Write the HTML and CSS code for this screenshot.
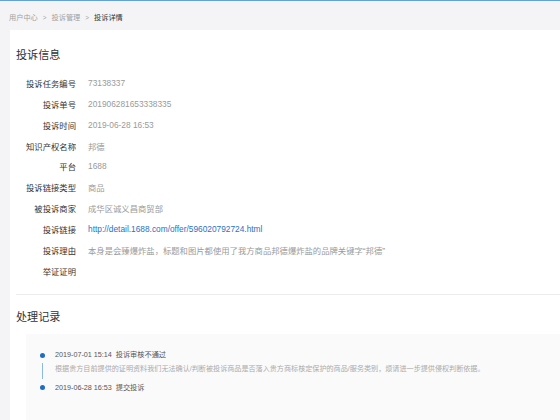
FILE: index.html
```html
<!DOCTYPE html>
<html lang="zh-CN">
<head>
<meta charset="utf-8">
<title>投诉详情</title>
<link rel="stylesheet" href="styles.css">
</head>
<body>
<div class="topbar"></div>
<nav class="crumbs">
  <span class="crumb">用户中心</span><span class="sep">&gt;</span><span class="crumb">投诉管理</span><span class="sep">&gt;</span><span class="crumb current">投诉详情</span>
</nav>
<main class="card">
  <h2 class="title">投诉信息</h2>
  <div class="rows">
    <div class="row"><span class="label">投诉任务编号</span><span class="value">73138337</span></div>
    <div class="row"><span class="label">投诉单号</span><span class="value">201906281653338335</span></div>
    <div class="row"><span class="label">投诉时间</span><span class="value">2019-06-28 16:53</span></div>
    <div class="row"><span class="label">知识产权名称</span><span class="value">邦德</span></div>
    <div class="row"><span class="label">平台</span><span class="value">1688</span></div>
    <div class="row"><span class="label">投诉链接类型</span><span class="value">商品</span></div>
    <div class="row"><span class="label">被投诉商家</span><span class="value">成华区诚义昌商贸部</span></div>
    <div class="row"><span class="label">投诉链接</span><a class="value link" href="#">http://detail.1688.com/offer/596020792724.html</a></div>
    <div class="row"><span class="label">投诉理由</span><span class="value">本身是会臻爆炸盐，标题和图片都使用了我方商品邦德爆炸盐的品牌关键字“邦德”</span></div>
    <div class="row"><span class="label">举证证明</span><span class="value"></span></div>
  </div>
  <div class="divider"></div>
  <h2 class="title title2">处理记录</h2>
  <div class="records">
    <div class="item first">
      <div class="rail"><span class="dot"></span><span class="line"></span></div>
      <div class="body">
        <div class="head">2019-07-01 15:14&nbsp; 投诉审核不通过</div>
        <div class="note">根据贵方目前提供的证明资料我们无法确认/判断被投诉商品是否落入贵方商标核定保护的商品/服务类别，烦请进一步提供侵权判断依据。</div>
      </div>
    </div>
    <div class="item second">
      <div class="rail"><span class="dot"></span></div>
      <div class="body">
        <div class="head">2019-06-28 16:53&nbsp; 提交投诉</div>
      </div>
    </div>
  </div>
</main>
</body>
</html>
```

FILE: styles.css
```css
html, body {
  margin: 0;
  padding: 0;
  height: 420px;
  background: #f4f4f6;
  font-family: "Liberation Sans", "Noto Sans CJK SC", sans-serif;
  overflow: hidden;
}

.topbar {
  height: 1px;
  background: #62a0de;
}

.crumbs {
  padding: 11px 0 0 9px;
  height: 13px;
  line-height: 12px;
  font-size: 7.2px;
  color: #a0a0a0;
  white-space: nowrap;
}

.sep {
  margin: 0 5px;
  font-size: 6.4px;
}

.crumb.current {
  color: #333;
}

.card {
  box-sizing: border-box;
  margin: 5px 0 0 10px;
  background: #fff;
  padding: 17.3px 0 0 6px;
  height: 391px;
  overflow: hidden;
}

.title {
  margin: 0;
  font-size: 11.1px;
  font-weight: normal;
  line-height: 16px;
  color: #333;
}

.rows {
  margin-top: 9.3px;
}

.row {
  display: flex;
  height: 20.85px;
  align-items: center;
  font-size: 8.33px;
  white-space: nowrap;
}

.label {
  width: 60px;
  text-align: right;
  color: #333;
  flex: none;
}

.value {
  margin-left: 12px;
  color: #9a9a9a;
}

.link {
  color: #2c70c4;
  text-decoration: none;
}

.divider {
  margin-top: 13.1px;
  height: 1px;
  background: #ececec;
}

.title2 {
  margin-top: 13.7px;
}

.records {
  box-sizing: border-box;
  margin: 8.7px 0 0 10px;
  background: #fafafa;
  padding: 14.6px 0 0 13.5px;
  height: 88px;
}

.item {
  display: flex;
}

.item.second {
  margin-top: 1.6px;
}

.rail {
  width: 5px;
  flex: none;
  display: flex;
  flex-direction: column;
  align-items: center;
  padding-top: 4.5px;
}

.dot {
  width: 5px;
  height: 5px;
  border-radius: 50%;
  background: #1f6cc4;
}

.line {
  width: 1px;
  height: 16.6px;
  margin-top: 5px;
  background: #8ab8ea;
}

.body {
  margin-left: 10.5px;
  white-space: nowrap;
}

.head {
  font-size: 7.2px;
  line-height: 14px;
  color: #555;
}

.note {
  font-size: 7.1px;
  line-height: 14px;
  color: #aaa;
}
```
